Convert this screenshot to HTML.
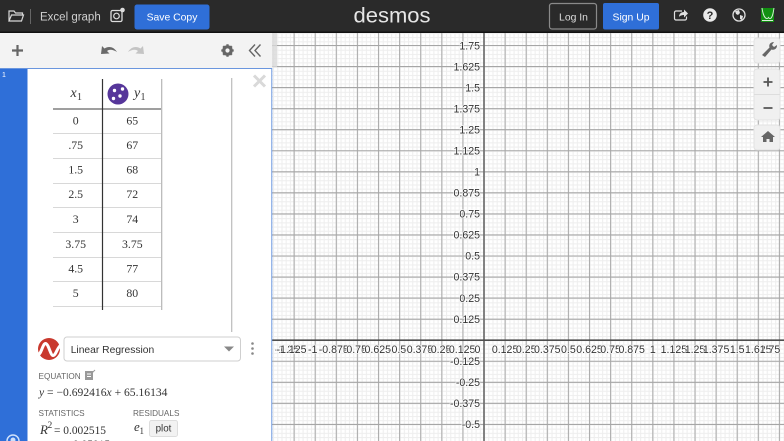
<!DOCTYPE html>
<html><head><meta charset="utf-8"><style>
html,body{margin:0;padding:0;width:784px;height:441px;overflow:hidden;background:#fff}
body{font-family:"Liberation Sans",sans-serif;position:relative}
svg{position:absolute;left:0;top:0;filter:blur(.35px);font-family:"Liberation Sans",sans-serif}
.m{font-family:"Liberation Serif",serif;fill:#333}
.lb{font-size:10.6px;fill:#333;stroke:#fff;stroke-width:1.6px;stroke-opacity:.75;paint-order:stroke}
</style></head><body>
<svg width="784" height="441" viewBox="0 0 784 441">
<defs>
<pattern id="minor" x="484" y="340.200" width="4.220" height="4.210" patternUnits="userSpaceOnUse"><path d="M.5 0V4.210M0 .5H4.220" stroke="#eeeeee" stroke-width="1.100" fill="none"/></pattern>
</defs>
<rect width="784" height="441" fill="#fff"/>
<rect x="272" y="32" width="512" height="409" fill="url(#minor)"/>
<g stroke="#aeaeae" stroke-width="1.100" fill="none">
<path d="M294.100 32V441M315.200 32V441M336.300 32V441M357.400 32V441M378.500 32V441M399.600 32V441M420.700 32V441M441.800 32V441M462.900 32V441M505.100 32V441M526.200 32V441M547.300 32V441M568.400 32V441M589.500 32V441M610.600 32V441M631.700 32V441M652.800 32V441M673.900 32V441M695 32V441M716.100 32V441M737.200 32V441M758.300 32V441M779.400 32V441"/>
</g>
<g stroke="#a6a6a6" stroke-width="1.100" fill="none">
<path d="M272 45.500H784M272 66.550H784M272 87.600H784M272 108.650H784M272 129.700H784M272 150.750H784M272 171.800H784M272 192.850H784M272 213.900H784M272 234.950H784M272 256H784M272 277.050H784M272 298.100H784M272 319.150H784M272 361.250H784M272 382.300H784M272 403.350H784M272 424.400H784"/>
</g>
<path d="M484 32V441" stroke="#6e6e6e" stroke-width="1.700"/>
<path d="M272 340.200H784" stroke="#4e4e4e" stroke-width="1.600"/>
<rect x="272" y="32" width="5" height="35" fill="#d8d8d8" opacity=".8"/>
<g class="lb" text-anchor="end">
<text x="480" y="49.500">1.75</text><text x="480" y="70.500">1.625</text><text x="480" y="91.500">1.5</text><text x="480" y="112.500">1.375</text><text x="480" y="133.500">1.25</text><text x="480" y="154.500">1.125</text><text x="480" y="175.500">1</text><text x="480" y="196.500">0.875</text><text x="480" y="217.500">0.75</text><text x="480" y="238.500">0.625</text><text x="480" y="259.500">0.5</text><text x="480" y="280.500">0.375</text><text x="480" y="302">0.25</text><text x="480" y="323">0.125</text>
<text x="480" y="365">-0.125</text><text x="480" y="386">-0.25</text><text x="480" y="407">-0.375</text><text x="480" y="428">-0.5</text>
</g>
<g class="lb" text-anchor="middle">
<text x="287" y="353">-1.25</text><text x="291.500" y="353">-1.125</text><text x="312.700" y="353">-1</text><text x="333.800" y="353">-0.875</text><text x="354.900" y="353">-0.75</text><text x="376" y="353">-0.625</text><text x="397.100" y="353">-0.5</text><text x="418.200" y="353">-0.375</text><text x="439.300" y="353">-0.25</text><text x="460.400" y="353">-0.125</text><text x="477.500" y="353">0</text>
<text x="505.100" y="353">0.125</text><text x="526.200" y="353">0.25</text><text x="547.300" y="353">0.375</text><text x="568.400" y="353">0.5</text><text x="589.500" y="353">0.625</text><text x="610.600" y="353">0.75</text><text x="631.700" y="353">0.875</text><text x="652.800" y="353">1</text><text x="673.900" y="353">1.125</text><text x="695" y="353">1.25</text><text x="716.100" y="353">1.375</text><text x="737.200" y="353">1.5</text><text x="758.300" y="353">1.625</text><text x="770" y="353">1.75</text>
</g>

<!-- side tools -->
<g fill="#f0f0f0" stroke="#e2e2e2">
<rect x="754" y="38" width="26" height="25" rx="3"/>
<rect x="754" y="69" width="26" height="51" rx="3"/>
<rect x="754" y="125" width="26" height="25" rx="3"/>
</g>
<path d="M754 94.500H780" stroke="#ddd"/>
<path d="M763.500 82H772.500M768 77.500V86.500M763.500 108H772.500" stroke="#555" stroke-width="1.800" fill="none"/>
<path d="M762 55l7.500-7.500c-1-3 1-5.500 4.500-5.500l-2 3 2 2 3-2c.2 3.500-2.500 5.500-5.500 4.500l-6.500 7.500z" fill="#666"/>
<path d="M761 137l7-6 7 6h-2v5h-3.500v-3h-3v3H763v-5z" fill="#666"/>

<!-- panel -->
<rect x="0" y="32" width="272" height="409" fill="#fff"/>
<rect x="0" y="33" width="272" height="35" fill="#f3f3f3"/>
<rect x="0" y="68" width="27.500" height="373" fill="#2f6fd8"/>
<path d="M0 68.500H272M271.800 68V441" stroke="#6a96de" stroke-width="1" fill="none"/>
<text x="2" y="77" style="font-size:7px;fill:#fff">1</text>
<circle cx="13" cy="441" r="6" fill="none" stroke="#cfe0fa" stroke-width="1.500"/>
<circle cx="13" cy="440" r="2.500" fill="#cfe0fa"/>

<path d="M12 50.500H23M17.500 45V56" stroke="#666" stroke-width="2.200" fill="none"/>
<path d="M101 54l1-8 2.500 2.500c4-2.500 9-2 12.500 3.500-4-2.500-7.500-3-10-1l2.500 2.500z" fill="#6a6a6a"/>
<path d="M144 54l-1-8-2.500 2.500c-4-2.500-9-2-12.500 3.500 4-2.500 7.500-3 10-1l-2.500 2.500z" fill="#c4c4c4"/>
<circle cx="227.500" cy="50.500" r="3.700" fill="none" stroke="#666" stroke-width="3.200"/>
<path d="M227.500 44.300V47M227.500 54V56.700M221.300 50.500H224M231 50.500H233.700M223.200 46.200l1.800 1.800M230 53l1.800 1.800M231.800 46.200L230 48M225 53l-1.800 1.800" stroke="#666" stroke-width="2.300"/>
<path d="M255 44.500l-5.500 6 5.500 6M260.500 44.500l-5.500 6 5.500 6" stroke="#666" stroke-width="1.400" fill="none"/>
<path d="M254 75.500l11 11M265 75.500l-11 11" stroke="#d9d9d9" stroke-width="3"/>

<!-- table -->
<g stroke="#d8d8d8" stroke-width="1">
<path d="M53 133.500H161M53 158.500H161M53 183.500H161M53 207.500H161M53 232.500H161M53 257.500H161M53 281.500H161M53 306.500H161"/>
</g>
<path d="M53 109H161" stroke="#666" stroke-width="1.200"/>
<path d="M102.500 79V310" stroke="#333" stroke-width="1.200"/>
<path d="M161.700 79V310" stroke="#b5b5b5" stroke-width="1.200"/>
<path d="M231.700 78V332" stroke="#bbb" stroke-width="1.200"/>
<circle cx="118" cy="94" r="10.500" fill="#56369a"/>
<g fill="#fff"><circle cx="114.500" cy="90.500" r="1.700"/><circle cx="122.500" cy="89" r="1.700"/><circle cx="120" cy="96" r="1.700"/><circle cx="113.500" cy="98.500" r="1.700"/></g>
<text x="70.500" y="97" class="m" font-style="italic" style="font-size:14px">x</text><text x="77" y="100" class="m" style="font-size:10px">1</text>
<text x="134" y="97" class="m" font-style="italic" style="font-size:14px">y</text><text x="140.500" y="100" class="m" style="font-size:10px">1</text>
<g class="m" text-anchor="middle" style="font-size:11.800px">
<text x="75.700" y="124.500">0</text><text x="132.300" y="124.500">65</text>
<text x="75.700" y="149">.75</text><text x="132.300" y="149">67</text>
<text x="75.700" y="173.500">1.5</text><text x="132.300" y="173.500">68</text>
<text x="75.700" y="198">2.5</text><text x="132.300" y="198">72</text>
<text x="75.700" y="223">3</text><text x="132.300" y="223">74</text>
<text x="75.700" y="248">3.75</text><text x="132.300" y="248">3.75</text>
<text x="75.700" y="272.500">4.5</text><text x="132.300" y="272.500">77</text>
<text x="75.700" y="297">5</text><text x="132.300" y="297">80</text>
</g>

<!-- regression -->
<circle cx="49" cy="349" r="11" fill="#c9392e"/>
<path d="M38.500 354.500c3-1 4-10.500 7-11 3 0 5 12 7.500 12 3 0 4-8 8-10.500" fill="none" stroke="#fff" stroke-width="3"/>
<rect x="64" y="337" width="176.500" height="24" rx="3" fill="#fff" stroke="#cfcfcf" stroke-width="1"/>
<text x="70.700" y="353" style="font-size:10.300px;fill:#333">Linear Regression</text>
<path d="M224 346.500h10l-5 5z" fill="#888"/>
<g fill="#888"><circle cx="252.500" cy="343.500" r="1.300"/><circle cx="252.500" cy="348.500" r="1.300"/><circle cx="252.500" cy="353.500" r="1.300"/></g>
<text x="38.500" y="379" style="font-size:8.200px;fill:#666">EQUATION</text>
<rect x="85" y="371" width="8" height="9" fill="#999"/>
<path d="M87 374h4M87 376.500h4" stroke="#fff"/><path d="M92 373l3-3" stroke="#999"/>
<text x="39" y="396" class="m" style="font-size:11.600px"><tspan font-style="italic">y</tspan> = −0.692416<tspan font-style="italic">x</tspan> + 65.16134</text>
<text x="38.500" y="416" style="font-size:8.200px;fill:#666">STATISTICS</text>
<text x="133" y="416" style="font-size:8.200px;fill:#666">RESIDUALS</text>
<text x="40" y="434" class="m" font-style="italic" style="font-size:13px">R</text>
<text x="47.500" y="428" class="m" style="font-size:9.500px">2</text>
<text x="54" y="434" class="m" style="font-size:11.400px">= 0.002515</text>
<text x="134" y="431" class="m" font-style="italic" style="font-size:13px">e</text><text x="139.500" y="434" class="m" style="font-size:9px">1</text>
<rect x="149.500" y="420.500" width="28" height="16" rx="2" fill="#f2f2f2" stroke="#ddd"/>
<text x="163.500" y="431.500" text-anchor="middle" style="font-size:9.800px;fill:#333">plot</text>
<text x="73" y="448" class="m" style="font-size:11.400px">0.05015</text>

<!-- header -->
<rect x="0" y="0" width="784" height="32" fill="#2a2a2a"/>
<rect x="0" y="31.500" width="784" height="1.500" fill="#111"/>
<path d="M9 21V11h5l1.500 2h7v2M9 21l2.500-6h12l-2 6z" fill="none" stroke="#d8d8d8" stroke-width="1.200"/>
<path d="M30.500 9V24" stroke="#666" stroke-width="1"/>
<text x="40" y="20.500" style="font-size:11.500px;fill:#d0d0d0">Excel graph</text>
<rect x="111" y="10.500" width="11" height="11" rx="1.500" fill="none" stroke="#ddd" stroke-width="1.300"/>
<circle cx="116.500" cy="16" r="2.800" fill="none" stroke="#ddd" stroke-width="1.200"/>
<circle cx="122.500" cy="10" r="2.300" fill="#ddd"/>
<rect x="134.500" y="4.500" width="75" height="25" rx="2.500" fill="#2f6fd8"/>
<text x="172" y="20.500" text-anchor="middle" style="font-size:10.400px;fill:#fff">Save Copy</text>
<text x="353.500" y="22.500" textLength="77" lengthAdjust="spacingAndGlyphs" style="font-size:21px;fill:#e6e6e6">desmos</text>
<rect x="549.500" y="3.500" width="47" height="25.500" rx="2.500" fill="none" stroke="#8a8a8a" stroke-width="1.200"/>
<text x="573.500" y="20.500" text-anchor="middle" style="font-size:10.400px;fill:#ddd">Log In</text>
<rect x="603" y="3" width="56" height="26.500" rx="2" fill="#2f6fd8"/>
<text x="631" y="20.500" text-anchor="middle" style="font-size:10.400px;fill:#fff">Sign Up</text>
<path d="M682 11h-6a1.500 1.500 0 0 0-1.500 1.500v6a1.500 1.500 0 0 0 1.500 1.500h9a1.500 1.500 0 0 0 1.500-1.500v-2" fill="none" stroke="#e0e0e0" stroke-width="1.200"/>
<path d="M679 17c0-3 2-5 5-5V9.500l4 4-4 4V15c-2 0-4 .5-5 2z" fill="#e0e0e0"/>
<circle cx="710" cy="15" r="6.800" fill="#eaeaea"/>
<text x="710" y="19" text-anchor="middle" style="font-size:11px;font-weight:bold;fill:#2a2a2a">?</text>
<circle cx="739" cy="15" r="6" fill="none" stroke="#e0e0e0" stroke-width="1.300"/>
<path d="M735 11l4-1 1 3-2 2-2-1zM740 15l3 1-1 4-2-1z" fill="#e0e0e0"/>
<rect x="761" y="8" width="13" height="14" fill="#119011"/>
<path d="M762 8c1 7 3 10.500 5 10.500 1 0 1.500-1 1.500-1s.5 1 1.500 1c2 0 3-4 4-10.500M762 20.500h11" fill="none" stroke="#d8f0d8" stroke-width=".9"/>
</svg>
</body></html>
